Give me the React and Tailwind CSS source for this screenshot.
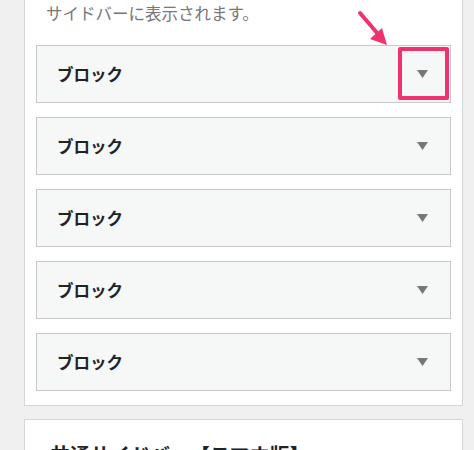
import React from 'react';

const Caret = () => (
  <svg width="11" height="8" viewBox="0 0 11 8" className="block">
    <path d="M0 0 H11 L5.5 8 Z" fill="#777" />
  </svg>
);

const BlockRow = ({ label, highlight }) => (
  <div className="relative flex h-[58px] items-center justify-between border border-[#c9c9cb] bg-[#f6f7f7] pl-[20px] pr-[22px]">
    <span className="text-[16.5px] font-bold text-[#1d2327]">{label}</span>
    <Caret />
    {highlight && (
      <>
        <div className="absolute right-[1px] top-[1px] h-[53px] w-[51px] rounded-[2px] border-[4px] border-[#f0336e]" />
        <svg className="absolute -top-[36px] right-[60px]" width="34" height="36" viewBox="0 0 34 36">
          <line x1="4" y1="3" x2="22" y2="24" stroke="#f0336e" strokeWidth="4" strokeLinecap="round" />
          <path d="M31 35 L14 29 L26 18 Z" fill="#f0336e" />
        </svg>
      </>
    )}
  </div>
);

export default function App() {
  return (
    <div
      className="h-[450px] overflow-hidden bg-[#f0f0f1] pl-[24px]"
      style={{ fontFamily: '"Noto Sans CJK JP", "Noto Sans", sans-serif' }}
    >
      <div className="w-[439px] border border-t-0 border-[#d6d6d8] bg-white px-[11px] pb-[14px]">
        <p className="pl-[10px] text-[16.5px] leading-[26px] text-[#777]">サイドバーに表示されます。</p>
        <div className="mt-[19px] flex flex-col gap-[14px]">
          <BlockRow label="ブロック" highlight />
          <BlockRow label="ブロック" />
          <BlockRow label="ブロック" />
          <BlockRow label="ブロック" />
          <BlockRow label="ブロック" />
        </div>
      </div>
      <div className="mt-[13px] w-[439px] border border-[#d6d6d8] bg-white pl-[25px] pr-[22px] pt-[21px] pb-[20px]">
        <div className="flex items-center justify-between">
          <span className="text-[20px] font-bold leading-[28px] text-[#1d2327]">共通サイドバー【スマホ版】</span>
          <Caret />
        </div>
      </div>
    </div>
  );
}
